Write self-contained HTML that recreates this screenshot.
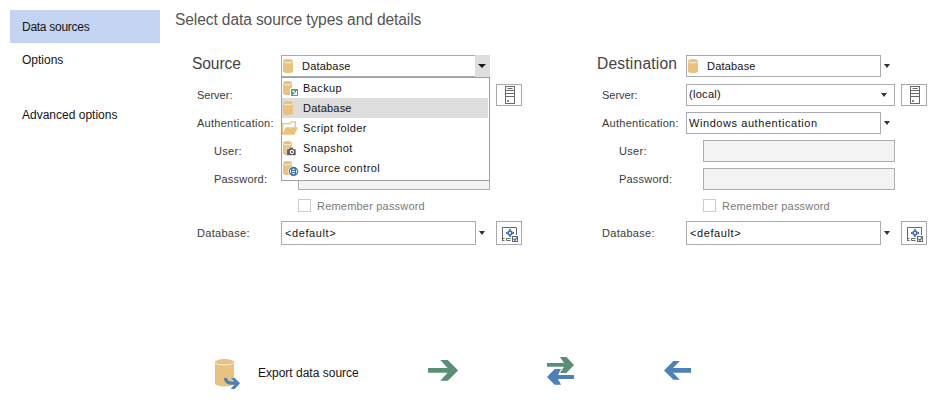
<!DOCTYPE html>
<html><head><meta charset="utf-8">
<style>
html,body{margin:0;padding:0;}
body{width:944px;height:409px;background:#fff;position:relative;overflow:hidden;font-family:"Liberation Sans",sans-serif;}
.a{position:absolute;}
.t{position:absolute;white-space:nowrap;line-height:1;}
.s11{font-size:11px;}
.s12{font-size:12px;}
.s15{font-size:15px;}
.lbl{color:#3a3a3a;}
.val{color:#141414;}
.box{position:absolute;box-sizing:border-box;border:1px solid #a9abb0;background:#fff;}
.dis{position:absolute;box-sizing:border-box;border:1px solid #adadad;background:#f3f3f3;}
.chk{position:absolute;box-sizing:border-box;border:1px solid #cdcdcd;background:#fff;width:13px;height:13px;}
.arr{position:absolute;width:0;height:0;border-left:3.75px solid transparent;border-right:3.75px solid transparent;border-top:4px solid #333;}
.btn{position:absolute;box-sizing:border-box;border:1px solid #a8a8a8;background:#fff;width:26px;}
svg{position:absolute;overflow:visible;}
</style></head>
<body>
<!-- sidebar -->
<div class="a" style="left:10px;top:10px;width:150px;height:33px;background:#c3d5f2;"></div>
<div class="t s12 val" style="left:22px;top:21px;letter-spacing:-0.27px;">Data sources</div>
<div class="t s12 val" style="left:22px;top:54px;">Options</div>
<div class="t s12 val" style="left:22px;top:109px;">Advanced options</div>

<div class="t" style="font-size:15.6px;left:175px;top:12px;color:#555;letter-spacing:-0.12px;">Select data source types and details</div>

<!-- SOURCE -->
<div class="t" style="font-size:15.6px;left:192px;top:56px;color:#444;letter-spacing:-0.1px;">Source</div>
<div class="t s11 lbl" style="left:197px;top:90px;">Server:</div>
<div class="t s11 lbl" style="left:197px;top:118px;letter-spacing:0.27px;">Authentication:</div>
<div class="t s11 lbl" style="left:214px;top:146px;letter-spacing:0.3px;">User:</div>
<div class="t s11 lbl" style="left:214px;top:174px;letter-spacing:0.2px;">Password:</div>
<div class="t s11 lbl" style="left:197px;top:228px;letter-spacing:0.3px;">Database:</div>

<div class="dis" style="left:298px;top:140px;width:192px;height:22px;"></div>
<div class="dis" style="left:298px;top:168px;width:192px;height:22px;"></div>
<div class="chk" style="left:298px;top:199px;"></div>
<div class="t s11" style="left:317px;top:201px;color:#7a7a7a;letter-spacing:0.2px;">Remember password</div>

<div class="box" style="left:281px;top:221px;width:195px;height:24px;"></div>
<div class="t s11 val" style="left:285px;top:228px;letter-spacing:0.6px;">&lt;default&gt;</div>
<div class="arr" style="left:479px;top:231px;"></div>
<div class="btn" style="left:496px;top:221px;height:24px;"></div>
<!-- db connect icon -->
<svg class="dbi" style="left:496px;top:221px;" width="26" height="24" viewBox="0 0 26 24">
  <path d="M6.5,20 V6.5 H20.5 V14" fill="none" stroke="#686868" stroke-width="1"/>
  <path d="M6.5,17.5 H8.5 M6.5,19.5 H8.5 M10.5,17.5 H14.5 M10.5,19.5 H14.5 M10.5,17.5 V19.5" fill="none" stroke="#686868" stroke-width="1"/>
  <circle cx="14" cy="12" r="1.9" fill="none" stroke="#3d74b6" stroke-width="1.6"/>
  <path d="M14,8 V9.6 M14,14.4 V16 M10,12 H11.6 M16.4,12 H18" stroke="#3d74b6" stroke-width="1.8"/>
  <rect x="16.5" y="15.5" width="5" height="5" fill="#fff" stroke="#686868" stroke-width="1"/>
  <path d="M17.4,17.6 L18.9,19.4 L21,16.4" fill="none" stroke="#3d74b6" stroke-width="1.3"/>
</svg>

<div class="btn" style="left:496px;top:84px;height:22px;"></div>
<!-- server icon -->
<svg style="left:496px;top:84px;" width="26" height="22" viewBox="0 0 26 22">
  <rect x="9.5" y="2.5" width="9" height="17" fill="#fff" stroke="#686868" stroke-width="1"/>
  <path d="M9.5,6.5 H18.5 M9.5,9.5 H18.5 M9.5,12.5 H18.5 M11.5,4.5 H16.5" stroke="#686868" stroke-width="1"/>
  <rect x="11" y="16" width="2" height="2" fill="#5a9f7f"/>
</svg>

<!-- source type combo (open) -->
<div class="box" style="left:281px;top:55px;width:195px;height:22px;"></div>
<div class="a" style="left:475px;top:55px;width:15px;height:22px;background:#dedede;"></div>
<div class="arr" style="left:478px;top:64px;border-left-width:4px;border-right-width:4px;border-top-color:#1a1a1a;"></div>
<svg style="left:283px;top:59px;" width="10" height="14" viewBox="0 0 10 14">
  <path d="M0,2 A5,2 0 0 1 10,2 V12 A5,2 0 0 1 0,12 Z" fill="#e8c27e"/>
  <path d="M0.4,2.6 A4.6,1.3 0 0 0 9.6,2.6" fill="none" stroke="#fff" stroke-width="0.9" opacity="0.85"/>
</svg>
<div class="t s11 val" style="left:302px;top:61px;letter-spacing:0.2px;">Database</div>

<!-- dropdown list -->
<div class="a" style="left:281px;top:77px;width:209px;height:104px;box-sizing:border-box;border:1px solid #a0a0a0;background:#fff;"></div>
<div class="a" style="left:282px;top:98px;width:206px;height:20px;background:#dddddd;"></div>
<!-- backup icon -->
<svg style="left:283px;top:81px;" width="16" height="16" viewBox="0 0 16 16">
  <path d="M0,2 A4.5,2 0 0 1 9,2 V12 A4.5,2 0 0 1 0,12 Z" fill="#e8c27e"/>
  <path d="M0.4,2.6 A4.1,1.3 0 0 0 8.6,2.6" fill="none" stroke="#fff" stroke-width="0.9" opacity="0.85"/>
  <rect x="7" y="7" width="9" height="9" fill="#fff"/>
  <rect x="8" y="8" width="7" height="7" fill="#5c9c84"/>
  <path d="M9.5,9.5 L13.2,13.2 M13.5,10 V13.5 H10" fill="none" stroke="#fff" stroke-width="1.1"/>
</svg>
<svg style="left:283px;top:101px;" width="10" height="14" viewBox="0 0 10 14">
  <path d="M0,2 A5,2 0 0 1 10,2 V12 A5,2 0 0 1 0,12 Z" fill="#e8c27e"/>
  <path d="M0.4,2.6 A4.6,1.3 0 0 0 9.6,2.6" fill="none" stroke="#fff" stroke-width="0.9" opacity="0.85"/>
</svg>
<!-- folder -->
<svg style="left:282px;top:121px;" width="16" height="14" viewBox="0 0 16 14">
  <path d="M0.7,13.5 V2.7 H7.6 L9.4,0.8 H13.3 V6" fill="none" stroke="#e8c27e" stroke-width="1.3" stroke-linejoin="round"/>
  <path d="M0.5,13.8 L3.6,6.3 H15.8 L12.6,13.8 Z" fill="#e8c27e"/>
</svg>
<!-- snapshot -->
<svg style="left:283px;top:141px;" width="14" height="15" viewBox="0 0 14 15">
  <path d="M0,2 A4.5,2 0 0 1 9,2 V12 A4.5,2 0 0 1 0,12 Z" fill="#e8c27e"/>
  <path d="M0.4,2.6 A4.1,1.3 0 0 0 8.6,2.6" fill="none" stroke="#fff" stroke-width="0.9" opacity="0.85"/>
  <path d="M3.6,14.5 V8 H5.6 L6.6,6.2 H9.6 L10.6,8 H13 V14.5 Z" fill="#5e5e5e" stroke="#fff" stroke-width="0.6"/>
  <circle cx="8.9" cy="11" r="1.6" fill="#444" stroke="#fff" stroke-width="1.1"/>
</svg>
<!-- source control -->
<svg style="left:283px;top:161px;" width="16" height="16" viewBox="0 0 16 16">
  <path d="M0,2 A4.5,2 0 0 1 9,2 V12 A4.5,2 0 0 1 0,12 Z" fill="#e8c27e"/>
  <path d="M0.4,2.6 A4.1,1.3 0 0 0 8.6,2.6" fill="none" stroke="#fff" stroke-width="0.9" opacity="0.85"/>
  <circle cx="10.5" cy="10.5" r="5.4" fill="#fff"/>
  <circle cx="10.5" cy="10.5" r="4.7" fill="#3d74b6"/>
  <rect x="9" y="10" width="3" height="1.1" fill="#fff"/>
  <path d="M10.5,7.3 L11.9,9.1 H9.1 Z M10.5,13.7 L11.9,11.9 H9.1 Z" fill="#fff"/>
  <path d="M7.5,8.8 V12.2 M13.5,8.8 V12.2" stroke="#fff" stroke-width="0.9"/>
</svg>
<div class="t s11 val" style="left:303px;top:83px;letter-spacing:0.4px;">Backup</div>
<div class="t s11 val" style="left:303px;top:103px;letter-spacing:0.2px;">Database</div>
<div class="t s11 val" style="left:303px;top:123px;letter-spacing:0.4px;">Script folder</div>
<div class="t s11 val" style="left:303px;top:143px;letter-spacing:0.4px;">Snapshot</div>
<div class="t s11 val" style="left:303px;top:163px;letter-spacing:0.45px;">Source control</div>

<!-- DESTINATION -->
<div class="t" style="font-size:15.6px;left:597px;top:56px;color:#444;letter-spacing:0.2px;">Destination</div>
<div class="t s11 lbl" style="left:602px;top:90px;">Server:</div>
<div class="t s11 lbl" style="left:602px;top:118px;letter-spacing:0.27px;">Authentication:</div>
<div class="t s11 lbl" style="left:619px;top:146px;letter-spacing:0.3px;">User:</div>
<div class="t s11 lbl" style="left:619px;top:174px;letter-spacing:0.2px;">Password:</div>
<div class="t s11 lbl" style="left:602px;top:228px;letter-spacing:0.3px;">Database:</div>

<div class="box" style="left:686px;top:55px;width:195px;height:22px;"></div>
<svg style="left:688px;top:59px;" width="10" height="14" viewBox="0 0 10 14">
  <path d="M0,2 A5,2 0 0 1 10,2 V12 A5,2 0 0 1 0,12 Z" fill="#e8c27e"/>
  <path d="M0.4,2.6 A4.6,1.3 0 0 0 9.6,2.6" fill="none" stroke="#fff" stroke-width="0.9" opacity="0.85"/>
</svg>
<div class="t s11 val" style="left:707px;top:61px;letter-spacing:0.2px;">Database</div>
<div class="arr" style="left:884px;top:64px;"></div>

<div class="box" style="left:686px;top:84px;width:209px;height:22px;"></div>
<div class="t s11 val" style="left:689px;top:89px;letter-spacing:0.3px;">(local)</div>
<div class="arr" style="left:881px;top:93px;"></div>
<div class="btn" style="left:901px;top:84px;height:22px;"></div>
<svg style="left:901px;top:84px;" width="26" height="22" viewBox="0 0 26 22">
  <rect x="9.5" y="2.5" width="9" height="17" fill="#fff" stroke="#686868" stroke-width="1"/>
  <path d="M9.5,6.5 H18.5 M9.5,9.5 H18.5 M9.5,12.5 H18.5 M11.5,4.5 H16.5" stroke="#686868" stroke-width="1"/>
  <rect x="11" y="16" width="2" height="2" fill="#5a9f7f"/>
</svg>

<div class="box" style="left:686px;top:112px;width:195px;height:22px;"></div>
<div class="t s11 val" style="left:689px;top:118px;letter-spacing:0.57px;">Windows authentication</div>
<div class="arr" style="left:884px;top:121px;"></div>

<div class="dis" style="left:703px;top:140px;width:192px;height:22px;"></div>
<div class="dis" style="left:703px;top:168px;width:192px;height:22px;"></div>
<div class="chk" style="left:703px;top:199px;"></div>
<div class="t s11" style="left:722px;top:201px;color:#7a7a7a;letter-spacing:0.2px;">Remember password</div>

<div class="box" style="left:686px;top:221px;width:195px;height:24px;"></div>
<div class="t s11 val" style="left:690px;top:228px;letter-spacing:0.6px;">&lt;default&gt;</div>
<div class="arr" style="left:884px;top:231px;"></div>
<div class="btn" style="left:901px;top:221px;height:24px;"></div>
<svg style="left:901px;top:221px;" width="26" height="24" viewBox="0 0 26 24">
  <path d="M6.5,20 V6.5 H20.5 V14" fill="none" stroke="#686868" stroke-width="1"/>
  <path d="M6.5,17.5 H8.5 M6.5,19.5 H8.5 M10.5,17.5 H14.5 M10.5,19.5 H14.5 M10.5,17.5 V19.5" fill="none" stroke="#686868" stroke-width="1"/>
  <circle cx="14" cy="12" r="1.9" fill="none" stroke="#3d74b6" stroke-width="1.6"/>
  <path d="M14,8 V9.6 M14,14.4 V16 M10,12 H11.6 M16.4,12 H18" stroke="#3d74b6" stroke-width="1.8"/>
  <rect x="16.5" y="15.5" width="5" height="5" fill="#fff" stroke="#686868" stroke-width="1"/>
  <path d="M17.4,17.6 L18.9,19.4 L21,16.4" fill="none" stroke="#3d74b6" stroke-width="1.3"/>
</svg>

<!-- bottom -->
<svg style="left:0;top:0;" width="944" height="409" viewBox="0 0 944 409">
  <!-- export icon -->
  <path d="M215,362 A9.5,3 0 0 1 234,362 V383.5 A9.5,3 0 0 1 215,383.5 Z" fill="#e8c27e"/>
  <path d="M215.4,363.4 A9.5,2.2 0 0 0 233.6,363.4" fill="none" stroke="#fff" stroke-width="0.9" opacity="0.8"/>
  <path d="M224,378 H227.2 C227.5,380.5 229,381.5 232,381.5 L234.5,381.5 L231,378 H234.7 L240,383.3 L234.7,388.9 H230.5 L234.5,384.7 L231,384.7 C226,384.7 224,381 224,378 Z" fill="#4b80b8"/>
  <!-- arrow right -->
  <path d="M428,368 L447.6,368 L440.3,360 L447.8,360 L458.1,370.4 L447.8,380.7 L440.3,380.7 L447.6,372.8 L428,372.8 Z" fill="#5a8f77"/>
  <!-- swap -->
  <path d="M574,375 L558,375 L561,369 L554.7,369 L547,376.9 L554.7,384.7 L561,384.7 L558,378.9 L574,378.9 Z" fill="#4b80b8"/>
  <path d="M547,363 L564,363 L560,357 L566.4,357 L574,364.9 L566.4,373 L560,373 L564,366.8 L547,366.8 Z" fill="#fff" stroke="#fff" stroke-width="1.4"/>
  <path d="M547,363 L564,363 L560,357 L566.4,357 L574,364.9 L566.4,373 L560,373 L564,366.8 L547,366.8 Z" fill="#5a8f77"/>
  <!-- arrow left -->
  <path d="M691,368 L673,368 L679.8,361 L673.4,361 L664,370.5 L673.4,379.8 L679.8,379.8 L673,372.8 L691,372.8 Z" fill="#4b80b8"/>
</svg>
<div class="t s12 val" style="left:258px;top:367px;">Export data source</div>

</body></html>
